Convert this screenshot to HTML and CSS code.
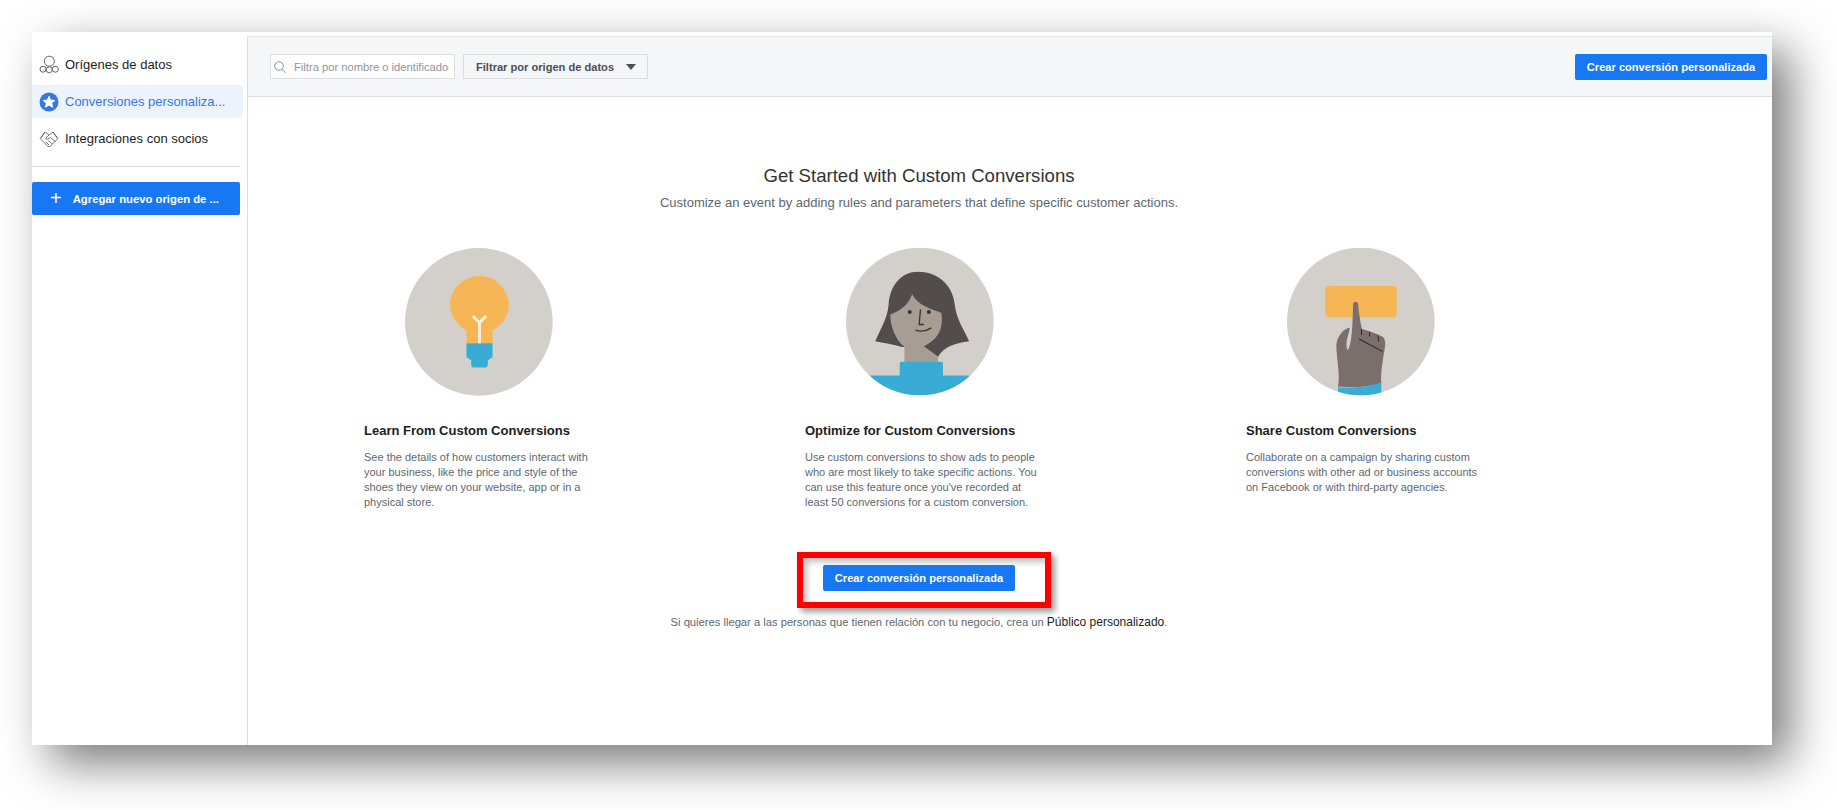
FILE: index.html
```html
<!DOCTYPE html>
<html lang="es">
<head>
  <meta charset="UTF-8">
  <title>Conversiones personalizadas</title>
  <link rel="stylesheet" href="styles.css">
</head>
<body>

<div class="window">
  <aside class="sidebar">
    <div class="nav-item">
      <svg class="nav-icon" viewBox="0 0 20 20" fill="none" stroke="#606770" stroke-width="1">
        <circle cx="10.300" cy="6.200" r="5"/><circle cx="4" cy="14.200" r="3"/><circle cx="10.300" cy="14.800" r="3"/><circle cx="16.300" cy="14.200" r="3"/>
      </svg>
      <span>Orígenes de datos</span>
    </div>
    <div class="nav-item active">
      <svg class="nav-icon" viewBox="0 0 20 20">
        <circle cx="10" cy="10" r="9.500" fill="#3578e5"/>
        <path d="M10 4.400l1.700 3.700 4 .4-3 2.700.9 4-3.600-2.100-3.600 2.100.9-4-3-2.700 4-.4z" fill="#fff" stroke="#fff" stroke-width="1" stroke-linejoin="round"/>
      </svg>
      <span>Conversiones personaliza...</span>
    </div>
    <div class="nav-item">
      <svg class="nav-icon" viewBox="0 0 20 20" fill="none" stroke="#606770" stroke-width="0.900" stroke-linejoin="round">
        <path d="M1 9.500L6 3L10 6L14 3L19 9.500L11 17.300Q10 18 9 17.300Z"/>
        <path d="M10 6L6.500 9.500Q8 11 10 9.500L11.500 8.500L16.300 12.500M6 3L2 9M14 3L18 9M7 13L10 16M9.500 11.500L13 14.800"/>
      </svg>
      <span>Integraciones con socios</span>
    </div>
    <hr class="divider">
    <button type="button" class="btn btn-add"><span class="plus">+</span>Agregar nuevo origen de ...</button>
  </aside>

  <main class="main">
    <div class="toolbar">
      <div class="search">
        <svg class="search-icon" viewBox="0 0 12 12" fill="none" stroke="#8d949e" stroke-width="1">
          <circle cx="5" cy="5" r="4.300"/><path d="M8 8l3.500 3.800"/>
        </svg>
        <span class="search-text">Filtra por nombre o identificador</span>
      </div>
      <button type="button" class="filter">Filtrar por origen de datos<span class="caret"></span></button>
      <button type="button" class="btn btn-create">Crear conversión personalizada</button>
    </div>

    <div class="content">
      <h1>Get Started with Custom Conversions</h1>
      <p class="subtitle">Customize an event by adding rules and parameters that define specific customer actions.</p>

      <div class="columns">
        <div class="col">
          <svg class="art" viewBox="195 55 443 443">
            <circle cx="416" cy="276" r="221" fill="#d3d0cb"/>
            <path d="M379 340V302C350 285 330 258 330 227C330 178 369 139 418 139S506 178 506 227C506 258 486 285 457 302V340Z" fill="#f7b655"/>
            <path d="M379 340H457V382L443 391V403Q443 413 433 413H403Q393 413 393 403V391L379 382Z" fill="#39acd6"/>
            <path d="M418 340V278M398 259L418 278L438 259" fill="none" stroke="#fbeedb" stroke-width="9"/>
          </svg>
          <h3>Learn From Custom Conversions</h3>
          <p>See the details of how customers interact with your business, like the price and style of the shoes they view on your website, app or in a physical store.</p>
        </div>
        <div class="col">
          <svg class="art" viewBox="198 57 441 441">
            <defs><clipPath id="clip-person"><circle cx="418" cy="276" r="220"/></clipPath></defs>
            <circle cx="418" cy="276" r="220" fill="#d3d0cb"/>
            <path d="M285 335C300 300 322 265 325 225C330 165 365 128 412 128C470 128 515 165 522 225C527 270 550 300 565 335C525 340 490 350 472 382L430 352H365C340 345 310 340 285 335Z" fill="#524c4c"/>
            <path d="M395 195C410 225 450 240 482 250C488 290 480 325 430 350L472 380V400H372V352C345 330 330 290 330 255C360 245 385 225 395 195Z" fill="#a89d95"/>
            <circle cx="388" cy="248" r="6" fill="#3a3535"/><circle cx="445" cy="248" r="6" fill="#3a3535"/>
            <path d="M420 240L416 285H430M405 302Q430 310 452 295" fill="none" stroke="#3a3535" stroke-width="4"/>
            <path clip-path="url(#clip-person)" d="M358 437V402a6 6 0 0 1 6-6H481a6 6 0 0 1 6 6V437H640V500H198V437Z" fill="#39acd6"/>
          </svg>
          <h3>Optimize for Custom Conversions</h3>
          <p>Use custom conversions to show ads to people who are most likely to take specific actions. You can use this feature once you've recorded at least 50 conversions for a custom conversion.</p>
        </div>
        <div class="col">
          <svg class="art" viewBox="201 57 441 441">
            <defs><clipPath id="clip-hand"><circle cx="421" cy="276" r="220"/></clipPath></defs>
            <circle cx="421" cy="276" r="220" fill="#d3d0cb"/>
            <rect x="315" y="170" width="213" height="94" rx="12" fill="#f7b655"/>
            <path d="M398 225a7.500 7.500 0 0 1 15 0C415 250 420 280 424 298L447 305L472 315L487 322C496 332 495 345 490 370C483 410 480 440 482 460C440 472 400 474 353 470C360 440 350 400 348 350C348 325 365 300 388 294C388 310 372 335 381 362C392 350 396 310 398 225Z" fill="#7a6f6d"/>
            <path clip-path="url(#clip-hand)" d="M353 472C400 474 440 472 482 457V500H353Z" fill="#39acd6"/>
            <path d="M423 298V316M447 308V320M472 318L474 335M416 328L485 365" fill="none" stroke="#2c2828" stroke-width="3"/>
          </svg>
          <h3>Share Custom Conversions</h3>
          <p>Collaborate on a campaign by sharing custom conversions with other ad or business accounts on Facebook or with third-party agencies.</p>
        </div>
      </div>

      <div class="cta">
        <button type="button" class="btn btn-create">Crear conversión personalizada</button>
      </div>
      <p class="footnote">Si quieres llegar a las personas que tienen relación con tu negocio, crea un <a href="#">Público personalizado</a>.</p>
    </div>
  </main>
</div>

</body>
</html>
```

FILE: styles.css
```css
html, body {
  margin: 0;
  height: 100%;
  overflow: hidden;
  background: #fff;
}
body {
  font-family: 'Liberation Sans', Arial, sans-serif;
  padding: 32px 0 0 32px;
  box-sizing: border-box;
}
.window {
  width: 1740px;
  height: 713px;
  background: #fff;
  display: flex;
  box-sizing: border-box;
  padding-top: 4px;
  box-shadow: 18px 18px 44px rgba(0,0,0,0.52);
}
.sidebar {
  width: 215px;
  flex: none;
  border-right: 1px solid #dadde1;
  padding-top: 12px;
}
.nav-item {
  display: flex;
  align-items: center;
  height: 33px;
  margin-bottom: 4px;
  width: 211px;
  font-size: 13px;
  color: #1c1e21;
  box-sizing: border-box;
  padding-left: 7px;
  border-radius: 0 4px 4px 0;
}
.nav-item.active {
  background: #edf3fd;
  color: #3578e5;
}
.nav-icon {
  width: 20px;
  height: 20px;
  margin-right: 6px;
  flex: none;
}
.divider {
  width: 208px;
  margin: 11px 0 15px;
  border: none;
  border-top: 1px solid #dadde1;
}
.btn {
  border: none;
  border-radius: 2px;
  background: #1877f2;
  color: #fff;
  font-family: inherit;
  font-size: 11.100px;
  font-weight: bold;
  white-space: nowrap;
  padding: 0;
  cursor: pointer;
}
.btn-add {
  width: 208px;
  height: 33px;
  display: flex;
  align-items: center;
  padding-left: 18px;
  font-size: 11.300px;
}
.plus {
  font-size: 20px;
  font-weight: normal;
  margin-right: 11px;
}
.main {
  flex: 1;
  min-width: 0;
}
.toolbar {
  display: flex;
  align-items: center;
  height: 61px;
  background: #f5f6f7;
  border-top: 1px solid #e4e6ea;
  border-bottom: 1px solid #dadde1;
  box-sizing: border-box;
  padding: 0 5px 0 22px;
}
.search {
  width: 185px;
  height: 25px;
  display: flex;
  align-items: center;
  background: #fff;
  border: 1px solid #dadde1;
  box-sizing: border-box;
  padding-right: 5px;
  margin-right: 8px;
}
.search-icon {
  width: 12px;
  height: 12px;
  margin: 0 8px 0 3px;
  flex: none;
}
.search-text {
  font-size: 11.200px;
  color: #90949c;
  white-space: nowrap;
  overflow: hidden;
}
.filter {
  width: 185px;
  height: 25px;
  background: #f5f6f7;
  border: 1px solid #dadde1;
  font-family: inherit;
  font-size: 11.100px;
  font-weight: bold;
  color: #4b4f56;
  white-space: nowrap;
  display: flex;
  align-items: center;
  padding: 0 0 0 12px;
}
.caret {
  margin-left: 12px;
  border-left: 5px solid transparent;
  border-right: 5px solid transparent;
  border-top: 6px solid #4b4f56;
}
.toolbar .btn-create {
  margin-left: auto;
  width: 192px;
  height: 26px;
}
.content {
  padding-right: 182px;
  text-align: center;
}
h1 {
  margin: 67px 0 0;
  font-size: 18.600px;
  font-weight: normal;
  line-height: 24px;
  color: #333;
}
.subtitle {
  margin: 6px 0 0;
  font-size: 13px;
  line-height: 18px;
  color: #606770;
}
.columns {
  display: flex;
  gap: 201px;
  margin: 36px 0 0;
  padding-left: 116px;
  text-align: left;
}
.col {
  width: 240px;
  height: 304px;
  flex: none;
}
.art {
  display: block;
  width: 148px;
  height: 148px;
  margin-left: 41px;
}
.col h3 {
  margin: 27px 0 0;
  font-size: 13px;
  line-height: 16px;
  color: #1c1e21;
}
.col p {
  margin: 11px 0 0;
  font-size: 11px;
  line-height: 15px;
  color: #606770;
}
.cta {
  display: inline-block;
  margin: 0 0 0 10px;
  padding: 7px 30px 11px 20px;
  border: 6px solid #f00;
  box-shadow: 4px 4px 6px rgba(0,0,0,0.4), inset 4px 4px 6px rgba(0,0,0,0.25);
  line-height: 0;
}
.cta .btn-create {
  width: 192px;
  height: 26px;
}
.footnote {
  margin: 7px 0 0;
  font-size: 11.200px;
  line-height: 15px;
  color: #606770;
}
.footnote a {
  font-size: 12px;
  color: #1c1e21;
  text-decoration: none;
}
```
